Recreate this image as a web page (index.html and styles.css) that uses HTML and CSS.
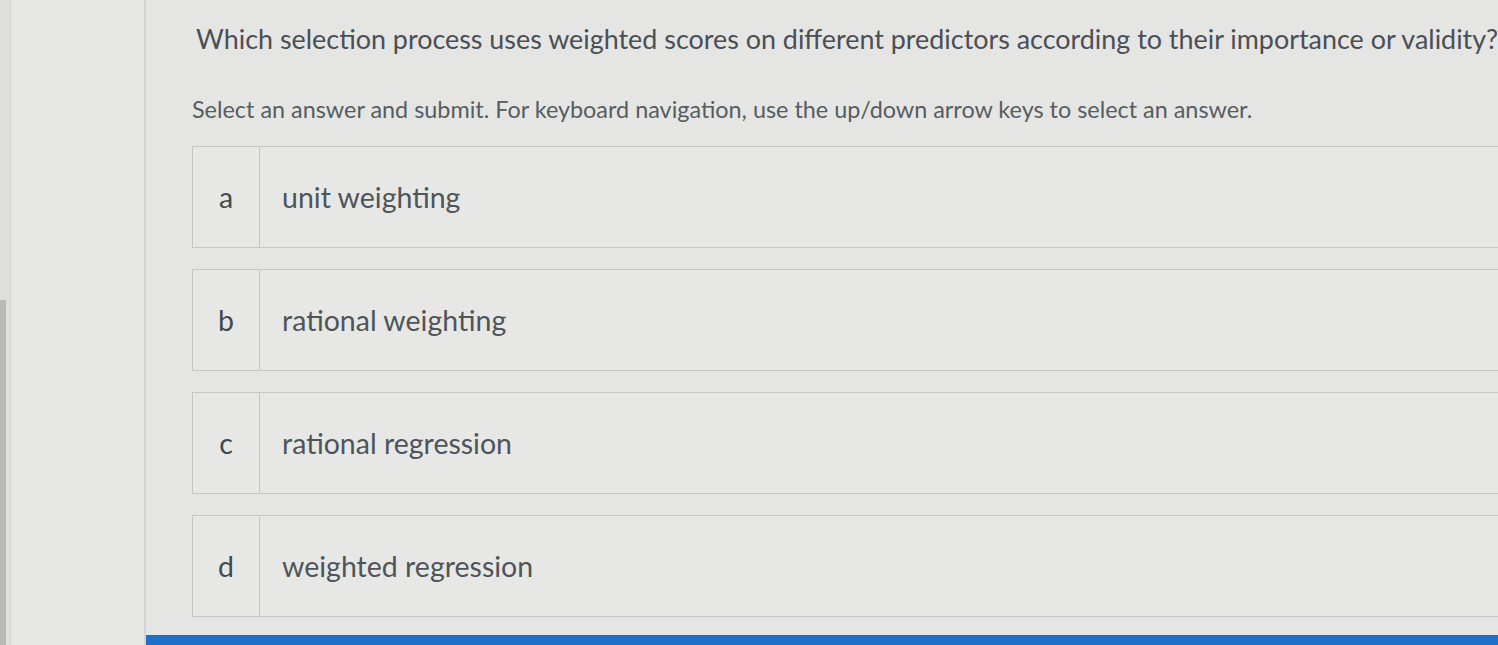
FILE: index.html
```html
<!DOCTYPE html>
<html lang="en">
<head>
<meta charset="utf-8">
<title>Question</title>
<link rel="stylesheet" href="styles.css">
</head>
<body>
<div class="app">
  <aside class="rail">
    <div class="rail-edge"><div class="rail-mark"></div></div>
    <div class="rail-panel"></div>
  </aside>
  <main class="main">
    <div class="question">
      <h1 class="prompt">Which selection process uses weighted scores on different predictors according to their importance or validity?</h1>
      <p class="hint">Select an answer and submit. For keyboard navigation, use the up/down arrow keys to select an answer.</p>
      <ul class="choices">
        <li class="choice"><span class="key">a</span><span class="label">unit weighting</span></li>
        <li class="choice"><span class="key">b</span><span class="label">rational weighting</span></li>
        <li class="choice"><span class="key">c</span><span class="label">rational regression</span></li>
        <li class="choice"><span class="key">d</span><span class="label">weighted regression</span></li>
      </ul>
    </div>
    <div class="footer-bar"></div>
  </main>
</div>
</body>
</html>
```
FILE: styles.css
```css
html, body {
  margin: 0;
  padding: 0;
  height: 100%;
  overflow: hidden;
}

body {
  background: #e5e6e4;
  font-family: Lato, "Open Sans", sans-serif;
  color: #52575d;
}

.app {
  display: flex;
  height: 645px;
}

.rail {
  display: flex;
  flex: 0 0 146px;
}

.rail-edge {
  width: 10px;
  background: #dfe0de;
  border-right: 1px solid #d2d3d1;
  display: flex;
  flex-direction: column;
  padding-top: 300px;
}

.rail-mark {
  width: 6px;
  height: 345px;
  background: #b9bab8;
}

.rail-panel {
  flex: 1;
  border-right: 2px solid #d4d5d3;
  background: #e7e8e6;
}

.main {
  flex: 1;
  display: flex;
  flex-direction: column;
  min-width: 0;
}

.question {
  flex: 1;
  padding: 20px 0 0 46px;
  overflow: hidden;
}

.prompt {
  margin: 0 0 0 4px;
  font-size: 26.9px;
  font-weight: 400;
  color: #4a4f55;
  white-space: nowrap;
  line-height: 38px;
}

.hint {
  margin: 36px 0 0 0;
  font-size: 23.4px;
  color: #575c61;
  white-space: nowrap;
  line-height: 30px;
}

.choices {
  list-style: none;
  margin: 22px 0 0 0;
  padding: 0;
  display: flex;
  flex-direction: column;
  gap: 21px;
}

.choice {
  display: flex;
  height: 100px;
  border: 1px solid #c6c7c5;
  border-right: none;
  background: #e7e8e6;
  font-size: 28.5px;
  color: #4f5459;
}

.key {
  flex: 0 0 66px;
  border-right: 1px solid #c6c7c5;
  display: flex;
  align-items: center;
  justify-content: center;
  color: #44494f;
}

.label {
  display: flex;
  align-items: center;
  padding-left: 22px;
}

.footer-bar {
  height: 10px;
  background: #1f6ec8;
}
```
